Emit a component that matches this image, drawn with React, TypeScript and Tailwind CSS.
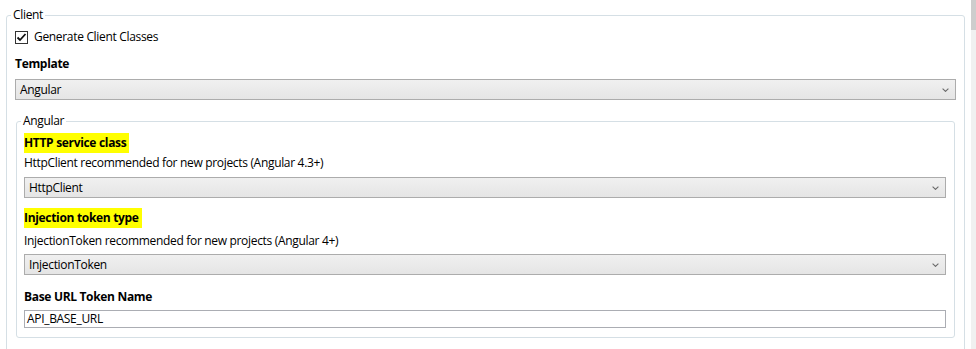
import React from 'react';

function Chevron() {
  return (
    <svg width="7" height="4" viewBox="0 0 7 4" className="shrink-0 mr-[1px]">
      <polyline points="0.6,0.6 3.5,3.4 6.4,0.6" fill="none" stroke="#6a6a6a" strokeWidth="1.1" />
    </svg>
  );
}

function Select({ value }: { value: string }) {
  return (
    <div className="h-[21px] flex items-center justify-between border border-[#acacac] bg-gradient-to-b from-[#f0f0f0] to-[#e5e5e5] pl-[4px] pr-[5px]">
      <span>{value}</span>
      <Chevron />
    </div>
  );
}

function Marked({ children }: { children: React.ReactNode }) {
  return (
    <div className="h-[20px] leading-[20px] font-bold">
      <span className="inline-block bg-[#ffff00] pr-[3px]">{children}</span>
    </div>
  );
}

export default function App() {
  return (
    <div className="w-[976px] h-[349px] overflow-hidden bg-white flex text-[12px] text-black font-['Segoe_UI','Open_Sans',sans-serif] tracking-[-0.32px]">
      <div className="flex-1 pl-[6px] pr-[6px] pt-[7px]">
        <fieldset className="border border-[#d5dfe5] rounded-[3px] pl-[8px] pr-[8px] pt-0 pb-[30px] m-0 min-w-0">
          <legend className="ml-[-4px] px-[2px] leading-[16px]">Client</legend>

          <div className="mt-[6px] h-[16px] flex items-center gap-[6px]">
            <span className="w-[13px] h-[13px] border border-[#333333] bg-white flex items-center justify-center">
              <svg width="11" height="11" viewBox="0 0 11 11">
                <polyline points="1.5,5.5 4,8 9.5,2" fill="none" stroke="#111" strokeWidth="1.8" />
              </svg>
            </span>
            <span>Generate Client Classes</span>
          </div>

          <div className="mt-[11px] h-[16px] leading-[16px] font-bold">Template</div>
          <div className="mt-[7px]">
            <Select value="Angular" />
          </div>

          <fieldset className="mt-[13px] mx-[1px] border border-[#d5dfe5] rounded-[3px] pl-[7px] pr-[8px] pt-0 pb-[9px] min-w-0">
            <legend className="ml-[-3px] px-[2px] leading-[16px]">Angular</legend>

            <div className="mt-[4px]">
              <Marked>HTTP service class</Marked>
            </div>
            <div className="mt-[2px] h-[16px] leading-[16px]">HttpClient recommended for new projects (Angular 4.3+)</div>
            <div className="mt-[6px]">
              <Select value="HttpClient" />
            </div>

            <div className="mt-[10px]">
              <Marked>Injection token type</Marked>
            </div>
            <div className="mt-[5px] h-[16px] leading-[16px]">InjectionToken recommended for new projects (Angular 4+)</div>
            <div className="mt-[5px]">
              <Select value="InjectionToken" />
            </div>

            <div className="mt-[14px] h-[16px] leading-[16px] font-bold">Base URL Token Name</div>
            <div className="mt-[5px] h-[18px] border border-[#abadb3] bg-white pl-[2px] leading-[16px]">API_BASE_URL</div>
          </fieldset>
        </fieldset>
      </div>
      <div className="w-[5px] h-full bg-[#f0f0f0]">
        <div className="h-[30px] bg-[#cdcdcd]" />
      </div>
    </div>
  );
}
